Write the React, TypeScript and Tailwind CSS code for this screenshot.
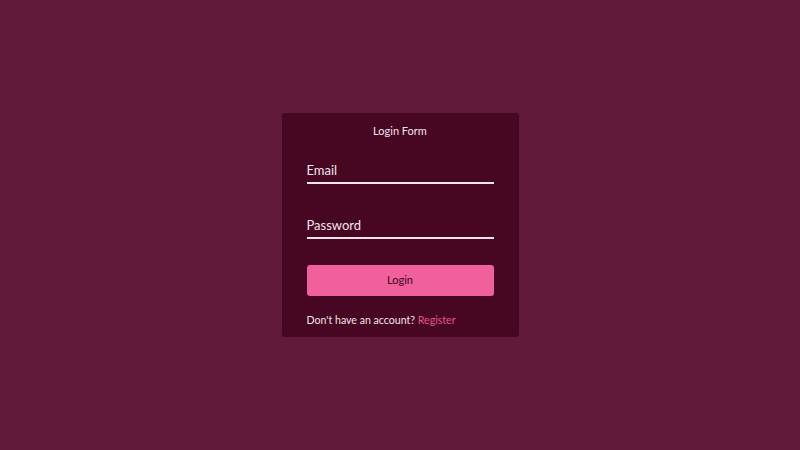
export default function App() {
  return (
    <div
      className="w-[800px] h-[450px] bg-[#621a3a] flex items-center justify-center"
      style={{ fontFamily: "Lato, 'Open Sans', sans-serif" }}
    >
      <form className="w-[237px] bg-[#470622] rounded-[3px] px-[25px] pt-[10px] pb-[9px] flex flex-col">
        <h1 className="text-center text-[11px] leading-[16px] text-[#f3e4ea]">Login Form</h1>
        <input
          type="email"
          placeholder="Email"
          className="mt-[19px] h-[26px] bg-transparent border-b-2 border-[#f3e4ea] text-[13px] text-[#f3e4ea] placeholder:text-[#f3e4ea] outline-none"
        />
        <input
          type="password"
          placeholder="Password"
          className="mt-[29px] h-[26px] bg-transparent border-b-2 border-[#f3e4ea] text-[13px] text-[#f3e4ea] placeholder:text-[#f3e4ea] outline-none"
        />
        <button
          type="button"
          className="mt-[26px] h-[31px] rounded-[3px] bg-[#f0609a] text-[11px] text-[#3c0620]"
        >
          Login
        </button>
        <p className="mt-[16px] text-[10.6px] leading-[16px] text-[#f3e4ea]">
          Don't have an account? <a className="text-[#e4558f]">Register</a>
        </p>
      </form>
    </div>
  );
}
